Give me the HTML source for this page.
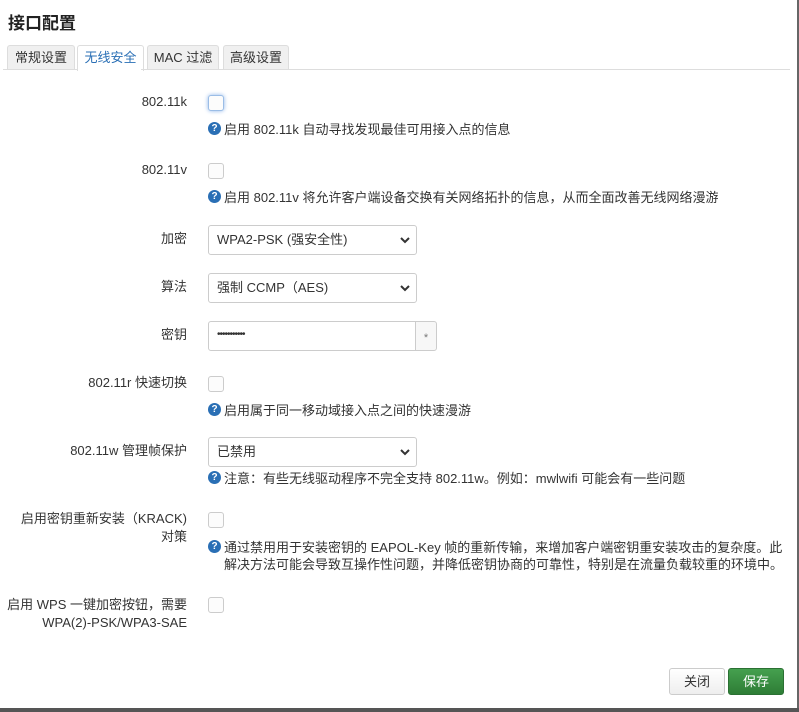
<!DOCTYPE html><html><head><meta charset="utf-8"><style>
body{margin:0;width:799px;height:712px;background:#fff;position:relative;overflow:hidden;font-family:"Liberation Sans","Noto Sans CJK SC",sans-serif;font-size:13px;color:#333}
.a{position:absolute}
h1{position:absolute;left:8px;top:9px;margin:0;font-size:17px;font-weight:bold;color:#222}
.tab{position:absolute;top:45px;height:24px;line-height:24px;border:1px solid #ddd;border-bottom:none;background:#f0f0f0;border-radius:3px 3px 0 0;text-align:center;color:#333}
.tab.on{background:#fff;color:#2a6fb5;height:25px}
.lbl{position:absolute;right:612px;text-align:right;line-height:18px}
.cb{position:absolute;left:208px;width:14px;height:14px;border:1px solid #ccc;border-radius:3px;background:#fcfcfc}
.help{position:absolute;left:208px;line-height:17px}
.q{display:inline-block;width:13px;height:13px;border-radius:50%;background:#2a6fb5;color:#fff;font-size:10px;font-weight:bold;text-align:center;line-height:13px;margin-right:3px;vertical-align:top;margin-top:1px}
.sel{position:absolute;left:208px;border:1px solid #ccc;border-radius:3px;line-height:28px;padding-left:8px;box-sizing:border-box;width:209px;height:30px}
.sel svg{position:absolute;right:6px;top:11px}
.btn{position:absolute;top:668px;height:27px;line-height:27px;text-align:center;border-radius:3px}
</style></head><body>
<h1>接口配置</h1>
<div class="tab" style="left:7px;width:66px">常规设置</div>
<div class="tab on" style="left:77px;width:65px">无线安全</div>
<div class="tab" style="left:147px;width:70px">MAC 过滤</div>
<div class="tab" style="left:223px;width:64px">高级设置</div>
<div class="a" style="left:3px;top:69px;width:787px;height:1px;background:#ddd"></div>
<div class="a" style="left:78px;top:69px;width:63px;height:1px;background:#fff"></div>

<div class="lbl" style="top:93px">802.11k</div>
<div class="cb" style="top:95px;border-color:#9bbde6;box-shadow:0 0 4px #8cb4ea"></div>
<div class="help" style="top:121px"><span class="q">?</span>启用 802.11k 自动寻找发现最佳可用接入点的信息</div>

<div class="lbl" style="top:161px">802.11v</div>
<div class="cb" style="top:163px"></div>
<div class="help" style="top:189px"><span class="q">?</span>启用 802.11v 将允许客户端设备交换有关网络拓扑的信息，从而全面改善无线网络漫游</div>

<div class="lbl" style="top:230px">加密</div>
<div class="sel" style="top:225px">WPA2-PSK (强安全性)<svg width="10" height="7"><path d="M1 1l4 4 4-4" stroke="#333" stroke-width="2" fill="none"/></svg></div>

<div class="lbl" style="top:278px">算法</div>
<div class="sel" style="top:273px">强制 CCMP（AES)<svg width="10" height="7"><path d="M1 1l4 4 4-4" stroke="#333" stroke-width="2" fill="none"/></svg></div>

<div class="lbl" style="top:326px">密钥</div>
<div class="a" style="left:208px;top:321px;width:208px;border:1px solid #ccc;border-radius:3px 0 0 3px;line-height:26px;padding-left:8px;box-sizing:border-box;height:30px;font-size:10px;letter-spacing:-1px">•••••••••••</div>
<div class="a" style="left:415px;top:321px;width:20px;height:28px;border:1px solid #ccc;border-radius:0 3px 3px 0;background:#f7f7f7;text-align:center;line-height:32px;color:#777;font-size:11px">*</div>

<div class="lbl" style="top:374px">802.11r 快速切换</div>
<div class="cb" style="top:376px"></div>
<div class="help" style="top:402px"><span class="q">?</span>启用属于同一移动域接入点之间的快速漫游</div>

<div class="lbl" style="top:442px">802.11w 管理帧保护</div>
<div class="sel" style="top:437px">已禁用<svg width="10" height="7"><path d="M1 1l4 4 4-4" stroke="#333" stroke-width="2" fill="none"/></svg></div>
<div class="help" style="top:470px"><span class="q">?</span>注意：有些无线驱动程序不完全支持 802.11w。例如：mwlwifi 可能会有一些问题</div>

<div class="lbl" style="top:510px">启用密钥重新安装（KRACK)<br>对策</div>
<div class="cb" style="top:512px"></div>
<div class="help" style="top:539px;width:580px"><span class="q">?</span>通过禁用用于安装密钥的 EAPOL-Key 帧的重新传输，来增加客户端密钥重安装攻击的复杂度。此<br><span style="padding-left:16px">解决方法可能会导致互操作性问题，并降低密钥协商的可靠性，特别是在流量负载较重的环境中。</span></div>

<div class="lbl" style="top:596px">启用 WPS 一键加密按钮，需要<br>WPA(2)-PSK/WPA3-SAE</div>
<div class="cb" style="top:597px"></div>

<div class="btn" style="left:669px;width:54px;border:1px solid #ccc;background:linear-gradient(#fff,#eee);height:25px;line-height:25px">关闭</div>
<div class="btn" style="left:728px;width:54px;background:linear-gradient(#45a04f,#2e7d36);color:#fff;border:1px solid #2b7033;height:25px;line-height:25px">保存</div>
<div class="a" style="left:0;top:708px;width:799px;height:4px;background:#555"></div>
<div class="a" style="left:797px;top:0;width:2px;height:708px;background:#666"></div>
</body></html>
